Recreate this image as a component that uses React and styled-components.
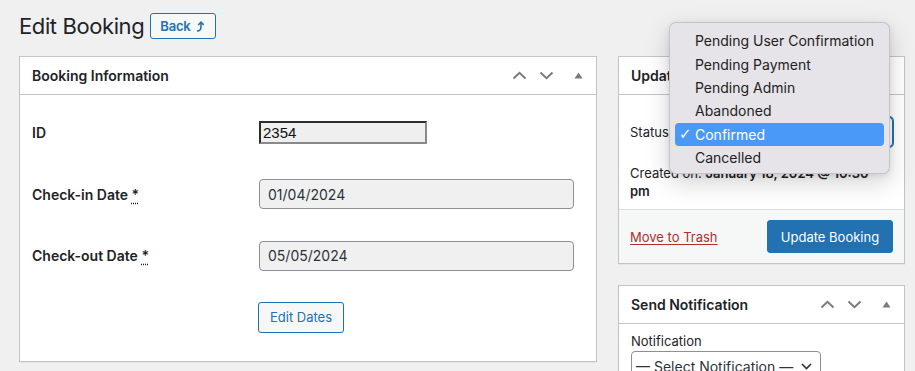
import React from 'react';
import styled, { createGlobalStyle } from 'styled-components';

const GlobalStyle = createGlobalStyle`
  html, body { margin: 0; padding: 0; background: #f0f0f1; }
  body {
    font-family: Inter, "Noto Sans", sans-serif;
    color: #1d2327;
    font-size: 13px;
  }
  * { box-sizing: border-box; }
`;

const Page = styled.div`
  padding: 13px 10px 0 19px;
  height: 371px;
  overflow: hidden;
`;

const TitleRow = styled.div`
  display: flex;
  align-items: center;
  gap: 6px;
  height: 26px;
`;

const Title = styled.h1`
  margin: 0;
  font-size: 22px;
  letter-spacing: -0.4px;
  font-weight: 400;
  line-height: 26px;
  color: #1d2327;
`;

const BackButton = styled.button`
  display: inline-flex;
  align-items: center;
  gap: 5px;
  height: 26px;
  padding: 0 11px 0 9px;
  border: 1px solid #2271b1;
  border-radius: 3px;
  background: #f6f7f7;
  color: #2271b1;
  font-family: inherit;
  font-size: 13px;
  letter-spacing: -0.2px;
  font-weight: 600;
`;

const Columns = styled.div`
  display: grid;
  grid-template-columns: 578px 287px;
  column-gap: 21px;
  align-items: start;
  margin-top: 17px;
`;

const Side = styled.div`
  display: flex;
  flex-direction: column;
  gap: 21px;
`;

const Postbox = styled.section`
  background: #fff;
  border: 1px solid #c3c4c7;
  box-shadow: 0 1px 1px rgba(0, 0, 0, 0.04);
`;

const PostboxHeader = styled.div`
  display: flex;
  align-items: center;
  height: 38px;
  padding-left: 12px;
  border-bottom: 1px solid #c3c4c7;
`;

const HeaderTitle = styled.h2`
  flex: 1;
  margin: 0;
  font-size: 14px;
  font-weight: 600;
  line-height: 1.4;
  color: #1d2327;
`;

const HandleButton = styled.button`
  display: flex;
  align-items: center;
  justify-content: center;
  width: ${(p) => p.$w}px;
  height: 36px;
  padding: 0;
  border: 0;
  background: none;
  color: #787c82;
`;

const FormBody = styled.div`
  padding: 7px 22px 13px 12px;
`;

const FieldRow = styled.div`
  display: grid;
  grid-template-columns: 227px 1fr;
  align-items: center;
  height: 61.5px;
`;

const FieldLabel = styled.label`
  font-size: 14px;
  font-weight: 600;
  color: #1d2327;
`;

const Req = styled.abbr`
  text-decoration: underline dotted;
  text-underline-offset: 3px;
  cursor: help;
`;

const IdInput = styled.input`
  width: 168px;
  height: 23px;
  padding: 0 2px;
  border-style: solid;
  border-width: 2px;
  border-color: #2c2c2c #8a8a8a #8a8a8a #2c2c2c;
  background: #efefef;
  font-family: "Liberation Sans", Arial, sans-serif;
  font-size: 15px;
  color: #111;
`;

const DateInput = styled.input`
  width: 315px;
  height: 30px;
  padding: 0 8px;
  border: 1px solid #8c8f94;
  border-radius: 4px;
  background: #f0f0f1;
  font-family: inherit;
  font-size: 14px;
  color: #2c3338;
`;

const SecondaryButton = styled.button`
  justify-self: start;
  width: 86px;
  height: 31px;
  padding: 0;
  margin-left: -1px;
  border: 1px solid #2271b1;
  border-radius: 3px;
  background: #f6f7f7;
  color: #2271b1;
  font-family: inherit;
  font-size: 13px;
`;

const UpdateBody = styled.div`
  padding: 22px 11px 9px 11px;
`;

const StatusRow = styled.div`
  position: relative;
  display: flex;
  align-items: center;
  justify-content: space-between;
  height: 30px;
  font-size: 13px;
`;

const StatusSelect = styled.div`
  width: 213px;
  height: 30px;
  border: 1px solid #2271b1;
  box-shadow: 0 0 0 1px #2271b1;
  border-radius: 4px;
  background: #fff;
`;

const CreatedOn = styled.p`
  max-width: 250px;
  margin: 17px 0 0;
  font-size: 13px;
  line-height: 18px;
  color: #1d2327;
  strong { font-weight: 600; }
`;

const Footer = styled.div`
  display: flex;
  align-items: center;
  justify-content: space-between;
  padding: 10px 11px;
  background: #f6f7f7;
  border-top: 1px solid #dcdcde;
`;

const TrashLink = styled.a`
  color: #b32d2e;
  font-size: 13px;
  text-decoration: underline;
  text-underline-offset: 2px;
`;

const PrimaryButton = styled.button`
  width: 126px;
  height: 33px;
  padding: 0;
  border: 1px solid #2271b1;
  border-radius: 3px;
  background: #2271b1;
  color: #fff;
  font-family: inherit;
  font-size: 13px;
`;

const NotifyBody = styled.div`
  padding: 8px 12px 12px;
`;

const SmallLabel = styled.label`
  display: block;
  font-size: 13px;
  line-height: 18px;
  color: #1d2327;
`;

const NotifySelect = styled.div`
  display: flex;
  align-items: center;
  justify-content: space-between;
  width: 190px;
  height: 30px;
  margin-top: 1px;
  padding: 0 8px 0 4px;
  border: 1px solid #8c8f94;
  border-radius: 4px;
  background: #fff;
  font-size: 14px;
  color: #2c3338;
`;

const Menu = styled.ul`
  position: absolute;
  left: 39px;
  top: -95px;
  width: 221px;
  margin: 0;
  padding: 6px 5px 4px;
  list-style: none;
  background: #e6e4e8;
  border: 1px solid rgba(0, 0, 0, 0.14);
  border-radius: 7px;
  box-shadow: 0 8px 24px rgba(0, 0, 0, 0.18), 0 2px 6px rgba(0, 0, 0, 0.08);
  z-index: 10;
`;

const MenuItem = styled.li`
  position: relative;
  height: 23.4px;
  display: flex;
  align-items: center;
  padding-left: 20px;
  border-radius: 4px;
  font-size: 14px;
  color: ${(p) => (p.$active ? '#fff' : '#222')};
  background: ${(p) => (p.$active ? '#4a99f8' : 'transparent')};
`;

const Check = styled.span`
  position: absolute;
  left: 4px;
  font-family: "DejaVu Sans", sans-serif;
  font-size: 15px;
`;

const ChevronUp = () => (
  <svg width="15" height="9" viewBox="0 0 15 9" fill="none">
    <polyline points="1.5,7.5 7.5,1.8 13.5,7.5" stroke="currentColor" strokeWidth="2" />
  </svg>
);

const ChevronDown = () => (
  <svg width="15" height="9" viewBox="0 0 15 9" fill="none">
    <polyline points="1.5,1.5 7.5,7.2 13.5,1.5" stroke="currentColor" strokeWidth="2" />
  </svg>
);

const Toggle = () => (
  <svg width="9" height="7" viewBox="0 0 9 7">
    <polygon points="0.5,6.5 4.5,0.5 8.5,6.5" fill="currentColor" />
  </svg>
);

const SmallChevron = () => (
  <svg width="11" height="7" viewBox="0 0 11 7" fill="none">
    <polyline points="1,1 5.5,5.5 10,1" stroke="#2c3338" strokeWidth="1.6" />
  </svg>
);

const BackArrow = () => (
  <svg width="8" height="11" viewBox="0 0 8 11" fill="none">
    <path d="M1 10 Q5 10 5 6 V1.5" stroke="currentColor" strokeWidth="1.6" />
    <path d="M2.2 4 L5 1.2 L7.8 4" stroke="currentColor" strokeWidth="1.6" />
  </svg>
);

const Handles = () => (
  <>
    <HandleButton $w={25}><ChevronUp /></HandleButton>
    <HandleButton $w={28}><ChevronDown /></HandleButton>
    <HandleButton $w={36}><Toggle /></HandleButton>
  </>
);

const statuses = [
  'Pending User Confirmation',
  'Pending Payment',
  'Pending Admin',
  'Abandoned',
  'Confirmed',
  'Cancelled',
];

export default function App() {
  return (
    <Page>
      <GlobalStyle />
      <TitleRow>
        <Title>Edit Booking</Title>
        <BackButton>
          Back <BackArrow />
        </BackButton>
      </TitleRow>

      <Columns>
        <Postbox>
          <PostboxHeader>
            <HeaderTitle>Booking Information</HeaderTitle>
            <Handles />
          </PostboxHeader>
          <FormBody>
            <FieldRow>
              <FieldLabel>ID</FieldLabel>
              <IdInput readOnly value="2354" />
            </FieldRow>
            <FieldRow>
              <FieldLabel>
                Check-in Date <Req title="required">*</Req>
              </FieldLabel>
              <DateInput readOnly value="01/04/2024" />
            </FieldRow>
            <FieldRow>
              <FieldLabel>
                Check-out Date <Req title="required">*</Req>
              </FieldLabel>
              <DateInput readOnly value="05/05/2024" />
            </FieldRow>
            <FieldRow>
              <span />
              <SecondaryButton>Edit Dates</SecondaryButton>
            </FieldRow>
          </FormBody>
        </Postbox>

        <Side>
          <Postbox>
            <PostboxHeader>
              <HeaderTitle>Update Booking</HeaderTitle>
            </PostboxHeader>
            <UpdateBody>
              <StatusRow>
                <span>Status</span>
                <StatusSelect />
                <Menu>
                  {statuses.map((s) => (
                    <MenuItem key={s} $active={s === 'Confirmed'}>
                      {s === 'Confirmed' && <Check>✓</Check>}
                      {s}
                    </MenuItem>
                  ))}
                </Menu>
              </StatusRow>
              <CreatedOn>
                Created on: <strong>January 18, 2024 @ 10:30 pm</strong>
              </CreatedOn>
            </UpdateBody>
            <Footer>
              <TrashLink href="#">Move to Trash</TrashLink>
              <PrimaryButton>Update Booking</PrimaryButton>
            </Footer>
          </Postbox>

          <Postbox>
            <PostboxHeader>
              <HeaderTitle>Send Notification</HeaderTitle>
              <Handles />
            </PostboxHeader>
            <NotifyBody>
              <SmallLabel>Notification</SmallLabel>
              <NotifySelect>
                <span>— Select Notification —</span>
                <SmallChevron />
              </NotifySelect>
            </NotifyBody>
          </Postbox>
        </Side>
      </Columns>
    </Page>
  );
}
